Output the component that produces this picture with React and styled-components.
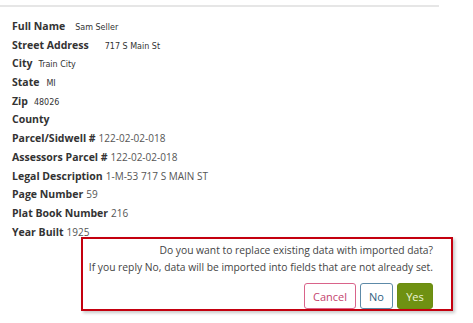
import React from "react";
import styled, { createGlobalStyle } from "styled-components";

const GlobalStyle = createGlobalStyle`
  body {
    margin: 0;
    background: #fff;
    font-family: "Open Sans", "Liberation Sans", sans-serif;
  }
`;

const fields = [
  { label: "Full Name", value: "Sam Seller", small: true, gap: 10 },
  { label: "Street Address", value: "717 S Main St", small: true, gap: 16 },
  { label: "City", value: "Train City", small: true, gap: 6 },
  { label: "State", value: "MI", small: true, gap: 7 },
  { label: "Zip", value: "48026", small: true, gap: 6 },
  { label: "County", value: "" },
  { label: "Parcel/Sidwell #", value: "122-02-02-018" },
  { label: "Assessors Parcel #", value: "122-02-02-018" },
  { label: "Legal Description", value: "1-M-53 717 S MAIN ST" },
  { label: "Page Number", value: "59" },
  { label: "Plat Book Number", value: "216" },
  { label: "Year Built", value: "1925" },
];

function App() {
  return (
    <Page>
      <GlobalStyle />
      <Divider />
      <FieldList>
        {fields.map((f) => (
          <Row key={f.label}>
            <Label>{f.label}</Label>
            {f.value && (
              <Value small={f.small} gap={f.gap}>
                {f.value}
              </Value>
            )}
          </Row>
        ))}
      </FieldList>
      <Confirm>
        <Message>
          Do you want to replace existing data with imported data?
          <br />
          If you reply No, data will be imported into fields that are not already set.
        </Message>
        <Actions>
          <Button kind="cancel">Cancel</Button>
          <Button kind="no">No</Button>
          <Button kind="yes">Yes</Button>
        </Actions>
      </Confirm>
    </Page>
  );
}

const Page = styled.div`
  width: 473px;
  height: 323px;
  padding-top: 5px;
  box-sizing: border-box;
  overflow: hidden;
`;

const Divider = styled.div`
  width: 439px;
  height: 2px;
  background: #e6e6e6;
`;

const FieldList = styled.div`
  display: flex;
  flex-direction: column;
  padding: 10px 0 0 12px;
`;

const Row = styled.div`
  display: flex;
  align-items: baseline;
  height: 18.7px;
  line-height: 18.7px;
  white-space: nowrap;
`;

const Label = styled.span`
  font-size: 10.5px;
  font-weight: 700;
  color: #333;
`;

const Value = styled.span`
  margin-left: ${({ gap }) => (gap ? gap : 3)}px;
  font-family: ${({ small }) =>
    small ? `"DejaVu Sans", Verdana, sans-serif` : `"Open Sans", sans-serif`};
  font-size: ${({ small }) => (small ? "8px" : "10px")};
  color: ${({ small }) => (small ? "#333" : "#555")};
`;

const Confirm = styled.div`
  margin: -4px 0 0 81px;
  width: 372px;
  box-sizing: border-box;
  border: 2px solid #c4000f;
  box-shadow: 2px 2px 3px rgba(0, 0, 0, 0.22);
  background: #fff;
  padding: 3px 18px 0 4px;
`;

const Message = styled.div`
  text-align: right;
  font-size: 10.3px;
  line-height: 17px;
  color: #444;
  white-space: nowrap;
`;

const Actions = styled.div`
  display: flex;
  justify-content: flex-end;
  gap: 4px;
  margin-top: 7px;
`;

const buttonColors = {
  cancel: { border: "#d9638a", color: "#c4446e", bg: "#fff", width: 52 },
  no: { border: "#5d8aa8", color: "#2f5f80", bg: "#fff", width: 33 },
  yes: { border: "#6b8c10", color: "#eef6d8", bg: "#6f9112", width: 36 },
};

const Button = styled.button`
  width: ${({ kind }) => buttonColors[kind].width}px;
  height: 26px;
  box-sizing: border-box;
  padding: 0;
  text-align: center;
  border: 1px solid ${({ kind }) => buttonColors[kind].border};
  border-radius: 3px;
  background: ${({ kind }) => buttonColors[kind].bg};
  color: ${({ kind }) => buttonColors[kind].color};
  font-family: "Open Sans", sans-serif;
  font-size: 11px;
  cursor: pointer;
`;

export default App;
